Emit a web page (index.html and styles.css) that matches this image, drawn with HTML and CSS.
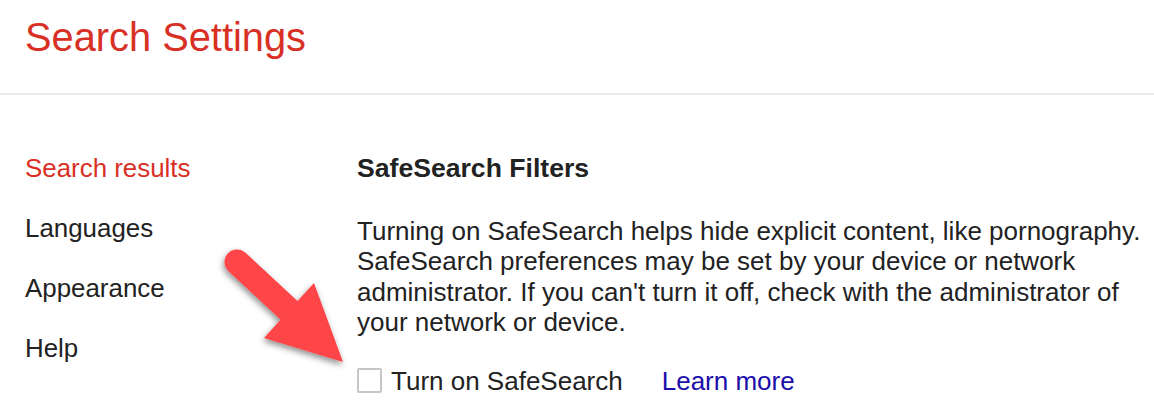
FILE: index.html
```html
<!DOCTYPE html>
<html>
<head>
<meta charset="utf-8">
<link rel="stylesheet" href="styles.css">
</head>
<body>
<header class="header">
  <h1 class="title">Search Settings</h1>
</header>
<div class="content">
  <nav class="sidebar">
    <a class="nav-item active">Search results</a>
    <a class="nav-item">Languages</a>
    <a class="nav-item">Appearance</a>
    <a class="nav-item">Help</a>
  </nav>
  <main class="main">
    <h2 class="heading">SafeSearch Filters</h2>
    <p class="desc">Turning on SafeSearch helps hide explicit content, like pornography. SafeSearch preferences may be set by your device or network administrator. If you can't turn it off, check with the administrator of your network or device.</p>
    <div class="row">
      <span class="checkbox"></span>
      <span class="label">Turn on SafeSearch</span>
      <a class="link">Learn more</a>
    </div>
  </main>
</div>
<svg class="arrow" width="160" height="150" viewBox="200 230 160 150">
  <defs>
    <filter id="sh" x="-30%" y="-30%" width="160%" height="160%">
      <feDropShadow dx="-1" dy="3" stdDeviation="3" flood-color="#000" flood-opacity="0.45"/>
    </filter>
  </defs>
  <g filter="url(#sh)" fill="#fe4447">
    <line x1="237" y1="262" x2="293" y2="314" stroke="#fe4447" stroke-width="25" stroke-linecap="round"/>
    <polygon points="314,283 343,362 264,338"/>
  </g>
</svg>
</body>
</html>
```
FILE: styles.css
```css
html, body {
  margin: 0;
  padding: 0;
  background: #fff;
}
body {
  font-family: "Liberation Sans", Arial, sans-serif;
  color: #222;
  position: relative;
  width: 1154px;
  height: 409px;
  overflow: hidden;
}
.header {
  box-sizing: border-box;
  height: 95px;
  border-bottom: 2px solid #ebebeb;
}
.title {
  margin: 0;
  padding: 13.5px 0 0 25px;
  font-size: 39.8px;
  line-height: 46px;
  font-weight: normal;
  color: #d93025;
}
.content {
  display: flex;
  padding-top: 58px;
}
.sidebar {
  width: 332px;
  padding-left: 25px;
  display: flex;
  flex-direction: column;
  gap: 30px;
}
.nav-item {
  font-size: 25.9px;
  line-height: 30px;
  color: #222;
}
.nav-item.active {
  color: #d93025;
}
.main {
  width: 797px;
}
.heading {
  margin: 0;
  font-size: 26.6px;
  line-height: 30px;
  font-weight: bold;
  color: #222;
}
.desc {
  margin: 32.6px 0 0 0;
  font-size: 26px;
  line-height: 30.5px;
}
.row {
  margin-top: 28.4px;
  display: flex;
  align-items: center;
  height: 30px;
  font-size: 26px;
  line-height: 30px;
}
.checkbox {
  width: 25px;
  height: 25px;
  box-sizing: border-box;
  border: 2px solid #c6c6c6;
  border-radius: 2px;
  margin-right: 9px;
}
.link {
  color: #1a0dab;
  margin-left: 39px;
}
.arrow {
  position: absolute;
  left: 200px;
  top: 230px;
}
```
